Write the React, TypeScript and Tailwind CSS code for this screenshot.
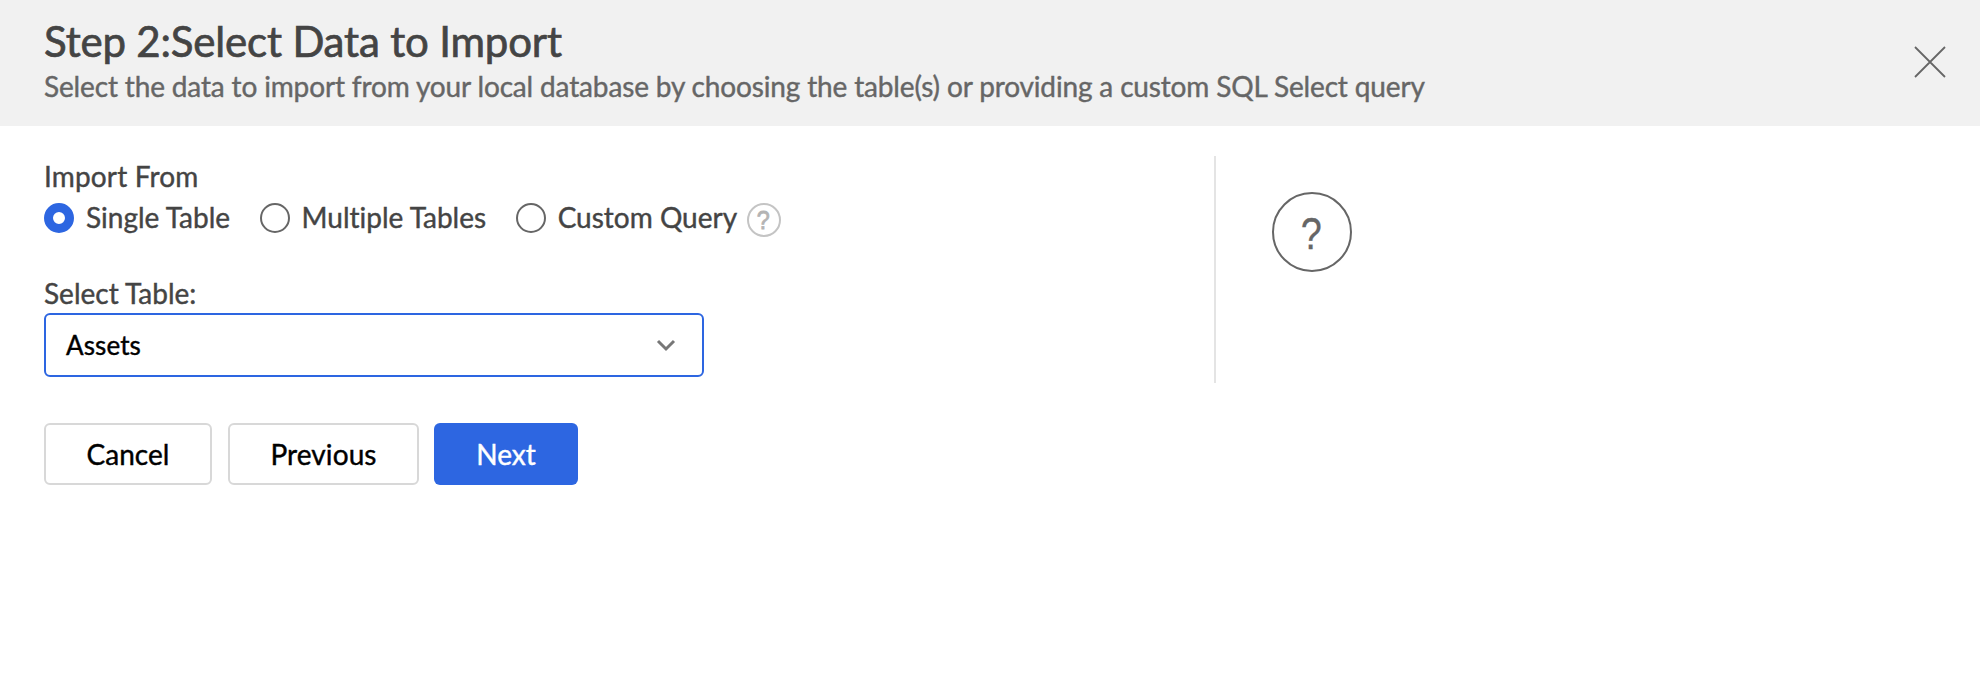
import { useState } from "react";

interface RadioOptionProps {
  label: string;
  checked: boolean;
  onSelect: () => void;
}

// Radio button with its label
const RadioOption: React.FC<RadioOptionProps> = ({ label, checked, onSelect }) => {
  return (
    <button
      type="button"
      role="radio"
      aria-checked={checked}
      onClick={onSelect}
      className="flex items-center whitespace-nowrap"
    >
      <span
        className={`mr-3 size-[30px] shrink-0 rounded-full ${
          checked ? "border-[9px] border-[#2d66e1]" : "border-2 border-[#666]"
        }`}
      />
      <span className="pb-0.5">{label}</span>
    </button>
  );
};

const options = ["Single Table", "Multiple Tables", "Custom Query"];

export default function App() {
  const [source, setSource] = useState<string>("Single Table");

  return (
    <div className="h-[686px] w-[1980px] overflow-hidden bg-white font-[Lato,sans-serif] text-[28px] leading-[36px] text-[#444] [font-variant-ligatures:none] [-webkit-text-stroke:0.4px]">
      {/* Header */}
      <header className="flex h-[126px] justify-between bg-[#f1f1f1] pl-11 pr-[33px]">
        <div className="pt-4">
          <h1 className="text-[42px] leading-[50px] tracking-[-0.18px] [-webkit-text-stroke:0.7px]">
            Step 2:Select Data to Import
          </h1>
          <p className="mt-[2px] tracking-[-0.15px] text-[#666]">
            Select the data to import from your local database by choosing the table(s) or providing a custom SQL Select query
          </p>
        </div>
        <button type="button" aria-label="Close" className="mt-[45px] size-[34px]">
          <svg viewBox="0 0 34 34" fill="none" stroke="#666" strokeWidth={1.8}>
            <path d="M2 2l30 30M32 2L2 32" />
          </svg>
        </button>
      </header>

      <main className="flex pl-11 pt-[30px]">
        <div className="w-[1170px]">
          <div className="pt-[2px] tracking-[0.15px]">Import From</div>
          <div className="mt-1.5 flex h-[36px] items-center gap-[29.5px]" role="radiogroup">
            {options.map((option) => (
              <RadioOption
                key={option}
                label={option}
                checked={source === option}
                onSelect={() => setSource(option)}
              />
            ))}
            <span className="-ml-5 mt-1 flex size-[34px] items-center justify-center rounded-full border-2 border-[#c4c4c4] font-['Liberation_Sans',sans-serif] text-[26px] text-[#b4b4b4] [-webkit-text-stroke:0.8px]">
              <span className="scale-x-90">?</span>
            </span>
          </div>

          <div className="mt-[39px]">Select Table:</div>
          <button
            type="button"
            className="mt-[2px] flex h-[64px] w-[660px] items-center justify-between rounded-md border-2 border-[#2d66e1] pl-5 pr-6 text-[26px] tracking-[0.1px] text-black"
          >
            <span>Assets</span>
            <svg className="size-6" viewBox="0 0 24 24" fill="none" stroke="#777" strokeWidth={3}>
              <path d="M4 8l8 8 8-8" />
            </svg>
          </button>
        </div>

        {/* Help panel */}
        <aside className="h-[227px] border-l-2 border-[#e4e4e4] pl-14 pt-9">
          <div className="flex size-20 items-center justify-center rounded-full border-2 border-[#666] pr-0.5 pt-1 font-['Liberation_Sans',sans-serif] text-[44px] text-[#666] [-webkit-text-stroke:0.3px]">
            <span className="scale-x-[0.86]">?</span>
          </div>
        </aside>
      </main>

      {/* Actions */}
      <div className="flex pl-11 pt-10 text-black">
        <button type="button" className="mr-4 h-[62px] w-[168px] rounded-md border-2 border-[#d8d8d8]">
          Cancel
        </button>
        <button
          type="button"
          className="mr-[15px] h-[62px] w-[191px] rounded-md border-2 border-[#d8d8d8] tracking-[0.1px]"
        >
          Previous
        </button>
        <button type="button" className="h-[62px] w-[144px] rounded-md bg-[#2d66e1] text-white">
          Next
        </button>
      </div>
    </div>
  );
}
